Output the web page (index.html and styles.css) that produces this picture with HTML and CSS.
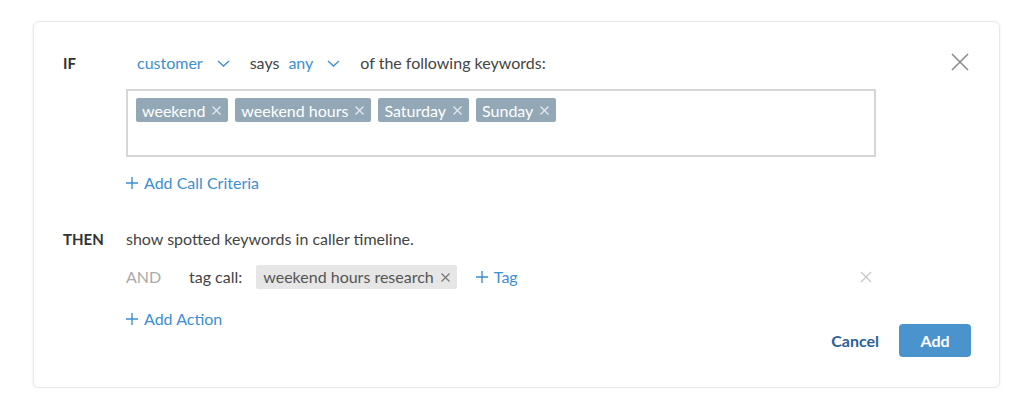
FILE: index.html
```html
<!DOCTYPE html>
<html lang="en">
<head>
    <meta charset="UTF-8">
    <meta name="viewport" content="width=device-width, initial-scale=1.0">
    <title>Keyword Rule</title>
    <link rel="stylesheet" href="styles.css">
</head>
<body>
    <div class="card">
        <button class="close-btn" aria-label="Close">
            <svg width="18" height="18" viewBox="0 0 18 18"><path d="M1 1L17 17M17 1L1 17" stroke="#8c8c8c" stroke-width="1.6"/></svg>
        </button>

        <div class="rule-row">
            <div class="rule-label">IF</div>
            <div class="rule-body">
                <div class="sentence">
                    <span class="select">customer <svg class="chevron" width="13" height="7" viewBox="0 0 13 7"><path d="M1 1L6.5 6L12 1" fill="none" stroke="#3d8fd1" stroke-width="1.3"/></svg></span>
                    <span class="plain">says</span>
                    <span class="select select-tight">any <svg class="chevron" width="13" height="7" viewBox="0 0 13 7"><path d="M1 1L6.5 6L12 1" fill="none" stroke="#3d8fd1" stroke-width="1.3"/></svg></span>
                    <span class="plain">of the following keywords:</span>
                </div>
                <div class="keyword-box">
                    <span class="chip">weekend <svg class="chip-x" width="9" height="9" viewBox="0 0 9 9"><path d="M0.5 0.5L8.5 8.5M8.5 0.5L0.5 8.5" stroke="#e4eaef" stroke-width="1.2"/></svg></span>
                    <span class="chip">weekend hours <svg class="chip-x" width="9" height="9" viewBox="0 0 9 9"><path d="M0.5 0.5L8.5 8.5M8.5 0.5L0.5 8.5" stroke="#e4eaef" stroke-width="1.2"/></svg></span>
                    <span class="chip">Saturday <svg class="chip-x" width="9" height="9" viewBox="0 0 9 9"><path d="M0.5 0.5L8.5 8.5M8.5 0.5L0.5 8.5" stroke="#e4eaef" stroke-width="1.2"/></svg></span>
                    <span class="chip">Sunday <svg class="chip-x" width="9" height="9" viewBox="0 0 9 9"><path d="M0.5 0.5L8.5 8.5M8.5 0.5L0.5 8.5" stroke="#e4eaef" stroke-width="1.2"/></svg></span>
                </div>
                <a class="add-link add-criteria" href="#"><svg class="plus" width="12" height="12" viewBox="0 0 12 12"><path d="M6 0V12M0 6H12" stroke="#3d8fd1" stroke-width="1.4"/></svg>Add Call Criteria</a>
            </div>
        </div>

        <div class="rule-row then-row">
            <div class="rule-label">THEN</div>
            <div class="rule-body">
                <div class="sentence plain">show spotted keywords in caller timeline.</div>
                <div class="action-row">
                    <div class="action-main">
                        <span class="and-label">AND</span>
                        <span class="plain">tag call:</span>
                        <span class="chip chip-gray">weekend hours research <svg class="chip-x" width="9" height="9" viewBox="0 0 9 9"><path d="M0.5 0.5L8.5 8.5M8.5 0.5L0.5 8.5" stroke="#777" stroke-width="1.2"/></svg></span>
                        <a class="add-link" href="#"><svg class="plus" width="12" height="12" viewBox="0 0 12 12"><path d="M6 0V12M0 6H12" stroke="#3d8fd1" stroke-width="1.4"/></svg>Tag</a>
                    </div>
                    <svg class="row-x" width="12" height="12" viewBox="0 0 12 12"><path d="M1 1L11 11M11 1L1 11" stroke="#c4c4c4" stroke-width="1.2"/></svg>
                </div>
                <div class="bottom-row">
                    <a class="add-link" href="#"><svg class="plus" width="12" height="12" viewBox="0 0 12 12"><path d="M6 0V12M0 6H12" stroke="#3d8fd1" stroke-width="1.4"/></svg>Add Action</a>
                    <div class="buttons">
                        <button class="btn-cancel">Cancel</button>
                        <button class="btn-add">Add</button>
                    </div>
                </div>
            </div>
        </div>
    </div>
</body>
</html>
```

FILE: styles.css
```css
body {
    margin: 0;
    background-color: #fff;
    font-family: 'Lato', 'Noto Sans', sans-serif;
    font-size: 16px;
    color: #444;
}
.card {
    position: relative;
    margin: 21px 0 0 33px;
    width: 967px;
    height: 367px;
    box-sizing: border-box;
    padding: 29px 28px 0 29px;
    border: 1px solid #e6e9ec;
    border-radius: 6px;
    box-shadow: 0 1px 3px rgba(0,0,0,0.08);
}
.close-btn {
    position: absolute;
    top: 31px;
    right: 30px;
    padding: 0;
    border: none;
    background: none;
    line-height: 0;
}
.rule-row {
    display: flex;
}
.then-row {
    margin-top: 32px;
}
.rule-label {
    width: 63px;
    flex-shrink: 0;
    line-height: 24px;
    font-size: 15px;
    font-weight: bold;
    color: #333;
}
.rule-body {
    flex: 1;
    display: flex;
    flex-direction: column;
    align-items: flex-start;
}
.sentence {
    display: flex;
    align-items: center;
    line-height: 24px;
}
.select {
    display: inline-flex;
    align-items: center;
    gap: 14px;
    padding-left: 11px;
    margin-right: 20px;
    color: #3d8fd1;
}
.select-tight {
    padding-left: 9px;
    margin-right: 20px;
}
.chevron {
    margin-top: 1px;
}
.plain {
    color: #444;
}
.keyword-box {
    margin-top: 14px;
    width: 750px;
    height: 68px;
    box-sizing: border-box;
    padding: 7px 8px;
    border: 2px solid #d6d6d6;
    display: flex;
    align-items: flex-start;
    gap: 7px;
}
.chip {
    display: inline-flex;
    align-items: center;
    height: 24px;
    padding: 0 7px 0 6px;
    border-radius: 2px;
    background-color: #93a8b6;
    color: #fff;
    white-space: nowrap;
}
.chip-x {
    margin-left: 7px;
}
.chip-gray {
    background-color: #e6e6e6;
    color: #555;
    margin-left: 14px;
    padding: 0 7px 0 7px;
}
.add-link {
    display: inline-flex;
    align-items: center;
    color: #3d8fd1;
    text-decoration: none;
    line-height: 24px;
}
.plus {
    margin-right: 6px;
}
.add-criteria {
    margin-top: 14px;
}
.action-row {
    margin-top: 14px;
    width: 746px;
    display: flex;
    align-items: center;
    justify-content: space-between;
}
.action-main {
    display: flex;
    align-items: center;
    line-height: 24px;
}
.and-label {
    color: #aaa;
    width: 63px;
}
.action-main .add-link {
    margin-left: 19px;
}
.bottom-row {
    margin-top: 18px;
    align-self: stretch;
    display: flex;
    justify-content: space-between;
    align-items: flex-start;
}
.buttons {
    margin-top: 17px;
    display: flex;
    align-items: center;
    gap: 20px;
}
.btn-cancel {
    border: none;
    background: none;
    padding: 0;
    font-family: inherit;
    font-size: 16px;
    font-weight: bold;
    color: #2b6199;
}
.btn-add {
    width: 72px;
    height: 33px;
    border: none;
    border-radius: 4px;
    background-color: #4a93cd;
    font-family: inherit;
    font-size: 16px;
    font-weight: bold;
    color: #fff;
}
```
